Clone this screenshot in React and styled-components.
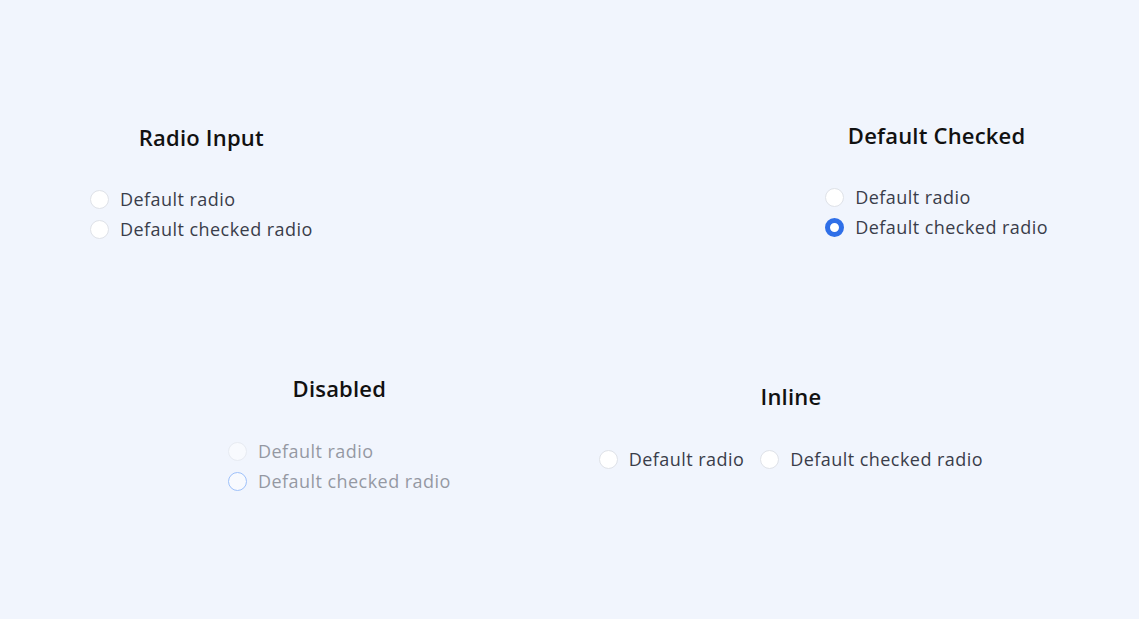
import styled, { createGlobalStyle } from 'styled-components';

const GlobalStyle = createGlobalStyle`
  html, body {
    margin: 0;
    padding: 0;
    background: #f1f5fd;
  }
  body {
    font-family: "Open Sans", Lato, sans-serif;
    color: #3a3d4a;
  }
`;

const Page = styled.main`
  width: 1139px;
  min-height: 619px;
  box-sizing: border-box;
  padding-top: 124px;
`;

const Row = styled.section`
  display: flex;
  align-items: flex-start;
  justify-content: ${(p) => p.$justify || 'flex-start'};
  gap: ${(p) => p.$gap || 0}px;
  padding: 0 ${(p) => p.$right || 0}px 0 ${(p) => p.$left || 0}px;
  margin-top: ${(p) => p.$top || 0}px;
`;

const Group = styled.div`
  display: flex;
  flex-direction: column;
  margin-top: ${(p) => p.$top || 0}px;
`;

const Heading = styled.h3`
  margin: 0 0 36px 0;
  font-size: 22px;
  font-weight: 600;
  letter-spacing: 0.2px;
  line-height: 1.2;
  color: #111;
  text-align: center;
`;

const Options = styled.div`
  display: flex;
  flex-direction: ${(p) => (p.$inline ? 'row' : 'column')};
  gap: ${(p) => (p.$inline ? 16 : 3)}px;
`;

const Check = styled.label`
  display: flex;
  align-items: center;
  gap: 11px;
  font-size: 18px;
  letter-spacing: 0.45px;
  line-height: 27px;
  opacity: ${(p) => (p.$disabled ? 0.5 : 1)};
`;

const Radio = styled.input.attrs({ type: 'radio' })`
  appearance: none;
  margin: 0;
  width: 19px;
  height: 19px;
  flex: none;
  border-radius: 50%;
  background: #fff;
  border: ${(p) => (p.$focus ? '1.5px solid #4d8ef8' : '1px solid #dfe2e8')};
  box-sizing: border-box;

  &:checked {
    border: 5px solid #2f6fe8;
    background: #fff;
  }
`;

const Option = ({ label, checked, disabled, focus, name }) => (
  <Check $disabled={disabled}>
    <Radio name={name} defaultChecked={checked} disabled={disabled} $focus={focus} />
    {label}
  </Check>
);

const App = () => (
  <>
    <GlobalStyle />
    <Page>
      <Row $justify="space-between" $left={90} $right={91}>
        <Group>
          <Heading>Radio Input</Heading>
          <Options>
            <Option name="a" label="Default radio" />
            <Option name="a" label="Default checked radio" />
          </Options>
        </Group>
        <Group $top={-2}>
          <Heading>Default Checked</Heading>
          <Options>
            <Option name="b" label="Default radio" />
            <Option name="b" label="Default checked radio" checked />
          </Options>
        </Group>
      </Row>
      <Row $left={228} $gap={148} $top={132}>
        <Group>
          <Heading>Disabled</Heading>
          <Options>
            <Option name="c" label="Default radio" disabled />
            <Option name="c" label="Default checked radio" disabled focus />
          </Options>
        </Group>
        <Group $top={8}>
          <Heading>Inline</Heading>
          <Options $inline>
            <Option name="d" label="Default radio" />
            <Option name="d" label="Default checked radio" />
          </Options>
        </Group>
      </Row>
    </Page>
  </>
);

export default App;
